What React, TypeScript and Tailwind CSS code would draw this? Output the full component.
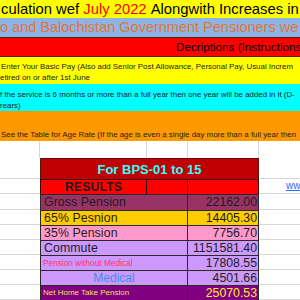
const font = "font-['Liberation_Sans',Arial,sans-serif]";

type Row = {
  label: string;
  value: string;
  bg: string;
  labelCls: string;
  valueCls: string;
  h: string;
};

const rows: Row[] = [
  { label: 'Gross Pension', value: '22162.00', bg: 'bg-[#993366]', labelCls: 'text-[12.3px] text-[#1c1c1c] pl-[3px] tracking-[0.1px]', valueCls: 'text-[12.3px] text-[#1c1c1c]', h: 'h-[16px]' },
  { label: '65% Pesnion', value: '14405.30', bg: 'bg-[#ffcc00]', labelCls: 'text-[12.3px] text-[#1c1c1c] pl-[3px] tracking-[0.1px]', valueCls: 'text-[12.3px] text-[#1c1c1c]', h: 'h-[15px]' },
  { label: '35% Pension', value: '7756.70', bg: 'bg-[#ff99cc]', labelCls: 'text-[12.3px] text-[#1c1c1c] pl-[3px] tracking-[0.1px]', valueCls: 'text-[12.3px] text-[#1c1c1c]', h: 'h-[15px]' },
  { label: 'Commute', value: '1151581.40', bg: 'bg-[#cc99ff]', labelCls: 'text-[12.3px] text-[#1c1c1c] pl-[3px] tracking-[0.1px]', valueCls: 'text-[12.3px] text-[#1c1c1c]', h: 'h-[15px]' },
  { label: 'Pension without Medical', value: '17808.55', bg: 'bg-[#cc99ff]', labelCls: 'text-[8.3px] text-[#ff3366] pl-[2px]', valueCls: 'text-[12.3px] text-[#1c1c1c]', h: 'h-[15px]' },
  { label: 'Medical', value: '4501.66', bg: 'bg-[#cc99ff]', labelCls: 'text-[12px] text-[#3d8fe8] justify-center', valueCls: 'text-[12.3px] text-[#1c1c1c]', h: 'h-[15px]' },
  { label: 'Net Home Take Pension', value: '25070.53', bg: 'bg-[#800080]', labelCls: 'text-[8px] text-[#f2e34a] pl-[2px]', valueCls: 'text-[12.3px] text-[#ffee33]', h: 'h-[15px]' },
];

function Side({ children, right }: { children?: React.ReactNode; right?: boolean }) {
  return (
    <div className={`${right ? 'w-[41px]' : 'w-[40px]'} h-full border-b border-[#d8d8d8] box-border flex items-center overflow-hidden`}>
      {children}
    </div>
  );
}

export default function App() {
  return (
    <div className={`w-[300px] h-[300px] overflow-hidden bg-white ${font} flex flex-col`}>
      <div className="h-[18px] bg-[#ffff00] flex items-center whitespace-nowrap overflow-hidden text-[14.8px] text-black pl-[1px] leading-none">
        culation wef&nbsp;<span className="text-[#ff0000]">July 2022</span>&nbsp;Alongwith Increases in
      </div>
      <div className="h-[19px] bg-[#8db4e2] flex items-center whitespace-nowrap overflow-hidden text-[14.5px] text-[#e0743a] leading-none">
        o and Balochistan Government Pensioners we
      </div>
      <div className="h-[20px] bg-[#ff0000] border-y border-[#5a1a1a] box-border flex items-center whitespace-nowrap overflow-hidden text-[11.7px] text-black pl-[176px] leading-none">
        Decriptions (Instructions
      </div>
      <div className="h-[27px] bg-[#ffff00] flex flex-col justify-end pb-[1px] whitespace-nowrap overflow-hidden text-[7.9px] text-[#222] leading-[11px] pl-[1px]">
        <div>Enter Your Basic Pay (Also add Senior Post Allowance, Personal Pay, Usual Increm</div>
        <div className="-ml-[1px]">etired on or after 1st June</div>
      </div>
      <div className="h-[27px] bg-[#00ffff] flex flex-col justify-end whitespace-nowrap overflow-hidden text-[7.9px] text-[#222] leading-[11px]">
        <div>f the service is 6 months or more than a full year then one year will be added in it (D-</div>
        <div>rears)</div>
      </div>
      <div className="h-[30px] bg-[#ff9900] flex flex-col justify-end pb-[1px] whitespace-nowrap overflow-hidden text-[7.9px] text-[#222] leading-[11px] pl-[1px]">
        <div>See the Table for Age Rate (If the age is even a single day more than a full year then</div>
      </div>

      <div className="h-[17px] flex">
        <div className="w-[40px] border-r border-[#d8d8d8]" />
        <div className="w-[107px] border-r border-[#d8d8d8]" />
        <div className="w-[41px] border-r border-[#d8d8d8]" />
        <div className="w-[71px] border-r border-[#d8d8d8]" />
        <div className="w-[41px]" />
      </div>

      <div className="h-[21px] flex">
        <Side />
        <div className="w-[219px] bg-[#c00000] border-t border-x border-[#5a1010] box-border flex items-center justify-center text-[13px] font-bold text-[#33ffff] leading-none pt-[1px]">
          For BPS-01 to 15
        </div>
        <Side right />
      </div>

      <div className="h-[15px] flex">
        <Side />
        <div className="w-[219px] bg-[#ff0000] border-t border-x border-[#3a0a0a] box-border flex">
          <div className="w-[106px] border-r border-[#3a0a0a] flex items-center justify-center text-[12px] font-bold text-[#1a1a1a] leading-none tracking-[0.3px]">
            RESULTS
          </div>
          <div className="w-[41px] border-r border-[#3a0a0a]" />
          <div className="flex-1" />
        </div>
        <Side right>
          <span className="pl-[27px] text-[10px] text-[#3366ff] underline leading-none">ww</span>
        </Side>
      </div>

      {rows.map((r) => (
        <div key={r.label} className={`${r.h} flex`}>
          <Side />
          <div className={`w-[219px] ${r.bg} border-t border-x border-[#2a2a2a] box-border flex`}>
            <div className={`w-[147px] border-r border-[#2a2a2a] flex items-center whitespace-nowrap overflow-hidden leading-none ${r.labelCls}`}>
              {r.label}
            </div>
            <div className={`flex-1 flex items-center justify-end pr-[1px] leading-none ${r.valueCls}`}>
              {r.value}
            </div>
          </div>
          <Side right />
        </div>
      ))}
    </div>
  );
}
